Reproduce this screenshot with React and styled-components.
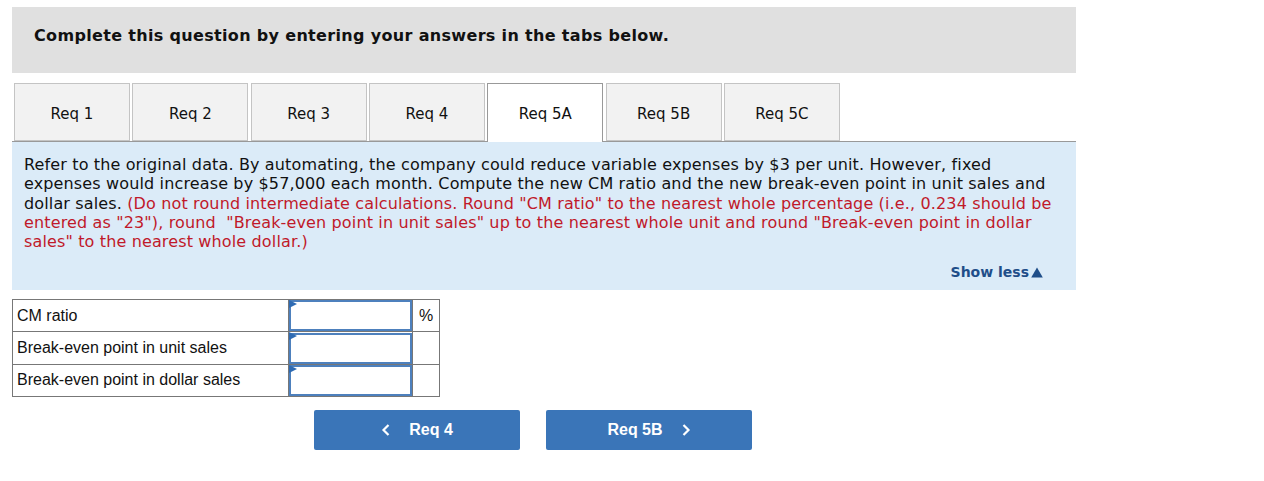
import React from "react";
import styled, { createGlobalStyle } from "styled-components";

const Global = createGlobalStyle`
  body {
    margin: 0;
    background: #fff;
    font-family: "DejaVu Sans", Verdana, sans-serif;
  }
`;

const Page = styled.div`
  padding: 7px 0 0 12px;
  width: 1064px;
`;

const Header = styled.div`
  background: #e0e0e0;
  height: 66px;
  box-sizing: border-box;
  padding: 19px 0 0 22px;
  font-weight: bold;
  font-size: 16px;
  line-height: 19px;
  color: #111;
  letter-spacing: 0.33px;
`;

const TabBar = styled.div`
  display: flex;
  gap: 2.33px;
  margin-top: 10px;
  padding-left: 2px;
  border-bottom: 1px solid #999;
  height: 58px;
`;

const Tab = styled.div`
  width: 116px;
  box-sizing: border-box;
  height: ${(p) => (p.$active ? "59px" : "58px")};
  display: flex;
  align-items: center;
  justify-content: center;
  padding-top: ${(p) => (p.$active ? "2px" : "3px")};
  font-size: 15px;
  color: #111;
  background: ${(p) => (p.$active ? "#fff" : "#f2f2f2")};
  border: 1px solid ${(p) => (p.$active ? "#999" : "#c4c4c4")};
  border-bottom: ${(p) => (p.$active ? "none" : "1px solid #c4c4c4")};
`;

const Panel = styled.div`
  background: #dbebf8;
  height: 148px;
  box-sizing: border-box;
  padding: 13px 12px 0 12px;
  position: relative;
`;

const Text = styled.p`
  margin: 0;
  font-size: 16px;
  line-height: 19.3px;
  letter-spacing: 0.14px;
  color: #111;
  white-space: nowrap;
`;

const Red = styled.span`
  color: #c0192a;
`;

const ShowLess = styled.div`
  position: absolute;
  right: 33px;
  bottom: 10px;
  display: flex;
  align-items: center;
  gap: 2px;
  font-weight: bold;
  font-size: 14px;
  color: #1f4e89;
`;

const Table = styled.table`
  margin-top: 9px;
  border-collapse: collapse;
  font-family: "Liberation Sans", Arial, sans-serif;
  font-size: 16px;
  color: #111;
`;

const Label = styled.td`
  border: 1px solid #777;
  width: 276px;
  height: 32.4px;
  padding: 0 0 0 4px;
  box-sizing: border-box;
`;

const InputCell = styled.td`
  border: 1px solid #777;
  width: 124px;
  padding: 0;
  position: relative;
  box-sizing: border-box;
`;

const Input = styled.div`
  height: 31px;
  box-sizing: border-box;
  border: 2px solid #4d80bd;
  background: #fff;
`;

const Flag = styled.span`
  position: absolute;
  z-index: 1;
  left: 0;
  top: 0;
  width: 0;
  height: 0;
  border-top: 4px solid transparent;
  border-bottom: 4px solid transparent;
  border-left: 8px solid #2f6bb3;
`;

const Unit = styled.td`
  border: 1px solid #777;
  width: 26px;
  text-align: center;
  padding: 0;
`;

const Nav = styled.div`
  display: flex;
  gap: 26px;
  margin: 13px 0 0 302px;
`;

const NavButton = styled.div`
  width: 206px;
  height: 40px;
  background: #3a75b8;
  border-radius: 2px;
  display: flex;
  align-items: center;
  justify-content: center;
  gap: 18px;
  color: #fff;
  font-family: "Liberation Sans", Arial, sans-serif;
  font-weight: bold;
  font-size: 16px;
`;

const Chevron = ({ dir }) => (
  <svg width="10" height="14" viewBox="0 0 10 14">
    <path
      d={dir === "left" ? "M7.5 2 L2.5 7 L7.5 12" : "M2.5 2 L7.5 7 L2.5 12"}
      fill="none"
      stroke="#fff"
      strokeWidth="2.2"
    />
  </svg>
);

const tabs = ["Req 1", "Req 2", "Req 3", "Req 4", "Req 5A", "Req 5B", "Req 5C"];

const rows = [
  { label: "CM ratio", unit: "%" },
  { label: "Break-even point in unit sales", unit: "" },
  { label: "Break-even point in dollar sales", unit: "" },
];

export default function App() {
  return (
    <>
      <Global />
      <Page>
        <Header>Complete this question by entering your answers in the tabs below.</Header>
        <TabBar>
          {tabs.map((t) => (
            <Tab key={t} $active={t === "Req 5A"}>
              {t}
            </Tab>
          ))}
        </TabBar>
        <Panel>
          <Text>
            Refer to the original data. By automating, the company could reduce variable expenses by $3 per unit. However, fixed
            <br />
            expenses would increase by $57,000 each month. Compute the new CM ratio and the new break-even point in unit sales and
            <br />
            dollar sales.{" "}
            <Red>
              (Do not round intermediate calculations. Round "CM ratio" to the nearest whole percentage (i.e., 0.234 should be
              <br />
              entered as "23"), round &nbsp;"Break-even point in unit sales" up to the nearest whole unit and round "Break-even point in dollar
              <br />
              sales" to the nearest whole dollar.)
            </Red>
          </Text>
          <ShowLess>
            Show less
            <svg width="12" height="11" viewBox="0 0 12 11">
              <path d="M6 0.5 L11.8 10.5 L0.2 10.5 Z" fill="#1f4e89" />
            </svg>
          </ShowLess>
        </Panel>
        <Table>
          <tbody>
            {rows.map((r) => (
              <tr key={r.label}>
                <Label>{r.label}</Label>
                <InputCell>
                  <Input />
                  <Flag />
                </InputCell>
                <Unit>{r.unit}</Unit>
              </tr>
            ))}
          </tbody>
        </Table>
        <Nav>
          <NavButton>
            <Chevron dir="left" />
            Req 4
          </NavButton>
          <NavButton>
            Req 5B
            <Chevron dir="right" />
          </NavButton>
        </Nav>
      </Page>
    </>
  );
}
